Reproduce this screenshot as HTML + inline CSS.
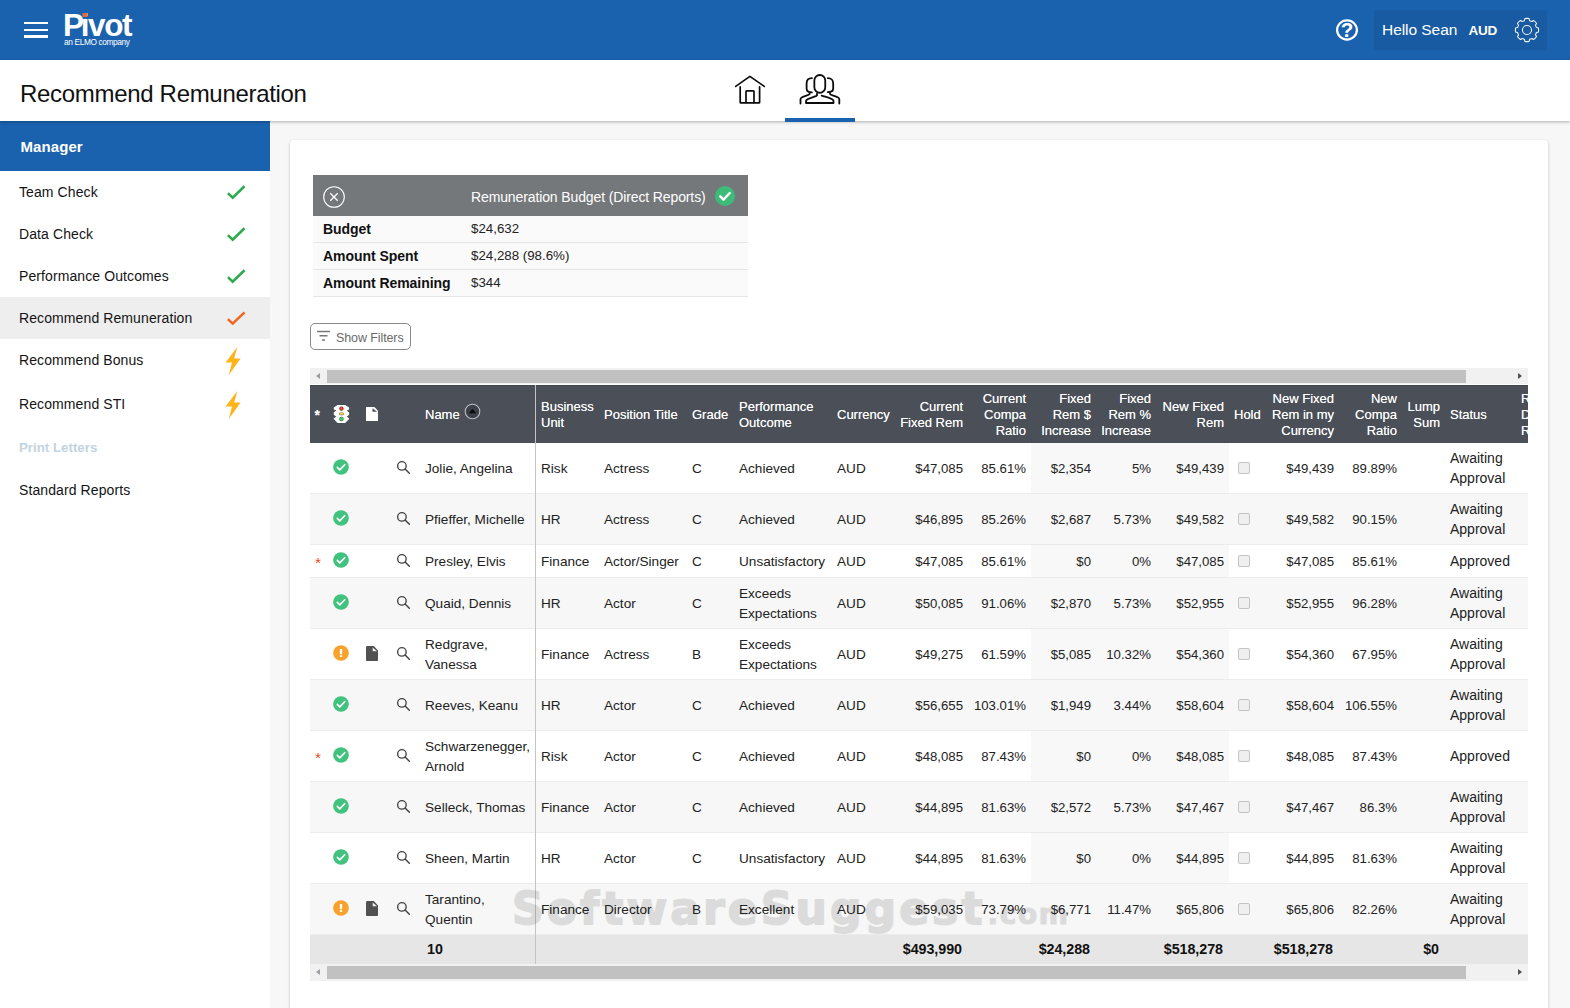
<!DOCTYPE html>
<html lang="en">
<head>
<meta charset="utf-8">
<title>Recommend Remuneration</title>
<style>
*{box-sizing:border-box;margin:0;padding:0}
html,body{width:1570px;height:1008px;overflow:hidden;background:#f7f7f7;font-family:"Liberation Sans",sans-serif;color:#212121}
.abs{position:absolute}
/* top bar */
#top{position:absolute;left:0;top:0;width:1570px;height:60px;background:#1a62ae}
#burger{position:absolute;left:24px;top:22px;width:24px;height:16px}
#burger i{position:absolute;left:0;width:24px;height:2.4px;background:#fff}
#logo{position:absolute;left:63px;top:7px;color:#fff;font-weight:bold;font-size:31.5px;letter-spacing:-1.35px;line-height:36px;white-space:nowrap}
#logodot{position:absolute;left:82.8px;top:12.8px;width:4.7px;height:4.4px;background:#f26a21}
#logosub{position:absolute;left:64px;top:37px;color:#fff;font-size:8.3px;letter-spacing:-.36px;line-height:10px;white-space:nowrap}
#userbox{position:absolute;left:1374px;top:10px;width:172.6px;height:39.6px;background:#195ba2;border-radius:3px}
#hello{position:absolute;left:1382px;top:19.7px;color:#fff;font-size:15.5px;line-height:20px;white-space:nowrap;letter-spacing:-.05px}
#aud{position:absolute;left:1468.6px;top:20.8px;color:#fff;font-size:13.5px;font-weight:bold;line-height:20px;letter-spacing:-.3px}
/* title bar */
#tbar{position:absolute;left:0;top:60px;width:1570px;height:61px;background:#fff;box-shadow:0 1px 3px rgba(0,0,0,.3);z-index:4}
#title{position:absolute;left:20px;top:18.7px;font-size:24px;line-height:30px;color:#111;white-space:nowrap;letter-spacing:-.31px}
#tabline{position:absolute;left:785px;top:58px;width:70px;height:4px;background:#1a62ae}
/* sidebar */
#side{position:absolute;left:0;top:121px;width:270px;height:887px;background:#fff}
#mgr{position:absolute;left:0;top:0;width:270px;height:50px;background:#1a62ae;color:#fff;font-weight:bold;font-size:15px;line-height:51.7px;padding-left:20.5px;letter-spacing:.08px}
.si{position:absolute;left:19px;font-size:14px;line-height:20px;color:#141414;white-space:nowrap;letter-spacing:.1px;margin-top:-.1px}
.si.dis{color:#c3d3e0;font-weight:bold;font-size:13.3px;letter-spacing:0}
#sel{position:absolute;left:0;top:176px;width:270px;height:42px;background:#eee}
.chk{position:absolute;left:225px;width:22px;height:18px}
.bolt{position:absolute;left:223px;width:20px;height:28px}
/* card */
#card{position:absolute;left:290px;top:140px;width:1258px;height:900px;background:#fff;border-radius:4px;box-shadow:0 1px 3px rgba(0,0,0,.24)}
/* budget */
#bud{position:absolute;left:313px;top:175px;width:435px;height:122px;font-size:13.5px}
#budh{position:absolute;left:0;top:0;width:435px;height:41px;background:#75787b;color:#fff}
#budh span{position:absolute;left:158px;top:12.3px;line-height:20px;white-space:nowrap;letter-spacing:-.12px;font-size:14px}
.br{position:absolute;left:0;width:435px;height:27px;background:#fafafa;border-bottom:1px solid #e6e6e6}
.br b{position:absolute;left:10px;top:3.1px;line-height:20px;color:#111;white-space:nowrap;font-size:14px;letter-spacing:-.05px}
.br span{position:absolute;left:158px;top:3.4px;line-height:20px;color:#222;white-space:nowrap;font-size:13.3px}
/* filter button */
#fbtn{position:absolute;left:310px;top:323px;width:101px;height:27px;border:1px solid #8a8a8a;border-radius:5px;background:#fff}
#fbtn span{position:absolute;left:25px;top:6.1px;font-size:12.5px;line-height:16px;color:#6a6a6a;white-space:nowrap;letter-spacing:-.1px}
/* scrollbars */
.sb{position:absolute;left:310px;width:1218px;height:16px;background:#f1f1f1}
.sb i{position:absolute;left:17px;top:2px;width:1139px;height:13px;background:#c1c1c1}
.sb b{position:absolute;top:5px;width:0;height:0;border:3.7px solid transparent}
.sb b.l{left:5.8px;border-right:4.3px solid #a09ca3;border-left:0}
.sb b.r{right:5.8px;border-left:4.4px solid #505050;border-right:0;top:4.8px;border-top-width:3.8px;border-bottom-width:3.8px}
/* grid */
#grid{position:absolute;left:310px;top:385px;width:1218px;height:579px;overflow:hidden}
#gh{position:absolute;left:0;top:0;width:1218px;height:58px;background:#4a4f58;box-shadow:inset 0 1px 0 #424750;color:#fff;font-size:13px;line-height:16px}
#gh span{position:absolute;white-space:nowrap;margin-top:-.1px;text-shadow:0 0 .6px rgba(255,255,255,.75)}
#gh span.r{text-align:right}
#vline{position:absolute;left:225px;top:0;width:1px;height:579px;background:#c4c4c4;z-index:3}
#body{position:absolute;left:0;top:58px;width:1218px;height:492px}
.row{position:absolute;left:0;width:1218px;border-bottom:1px solid #ebebeb;font-size:13.6px;line-height:20px;color:#222}
.row.odd{background:#fff}
.row.even{background:#f7f7f7}
.row .hl{position:absolute;left:721px;top:0;width:198px;height:100%;background:#f8f8f8}
.row.even .hl{background:transparent}
.c{position:absolute;top:0;height:100%;display:flex;align-items:center;white-space:nowrap}
.c.r{justify-content:flex-end;text-align:right;font-size:13.2px}
.c>span{position:relative;top:.7px}
.c.stat>span{top:-.2px}
.c.star{left:5px;color:#e8502a;font-size:15.5px;padding-top:4px}
.ic{position:absolute;top:50%}
.ic.st{left:23px;width:16px;height:16px;margin-top:-9px}
.ic.doc{left:56px;width:12px;height:15.2px;margin-top:-8.2px}
.ic.sr{left:86px;width:15px;height:15px;margin-top:-8px}
.name{left:115px}.bu{left:231px}.pos{left:294px}.gr{left:382px}.perf{left:429px}.cur{left:527px}
.cfr{left:560px;width:93px}.ccr{left:640px;width:76px}.frd{left:700px;width:81px}.frp{left:760px;width:81px}.nfr{left:830px;width:84px}
.nfrc{left:940px;width:84px}.ncr{left:1010px;width:77px}.stat{left:1140px;font-size:14px}
.cb{position:absolute;left:928px;top:50%;margin-top:-6px;width:12px;height:12px;border:1px solid #c4c4c4;border-radius:2px;background:#efefef}
#foot{position:absolute;left:0;top:550px;width:1218px;height:29px;background:#e6e6e6;font-weight:bold;font-size:14.3px;color:#111;letter-spacing:-.05px}
#foot span{position:absolute;top:3.6px;line-height:20px;white-space:nowrap;text-align:right}
#wm{position:absolute;left:512px;top:874px;font-family:"DejaVu Sans","Liberation Sans",sans-serif;font-size:44px;font-weight:bold;color:#000;-webkit-text-stroke:1.8px #000;opacity:.105;letter-spacing:3.1px;line-height:70px;white-space:nowrap;z-index:5;pointer-events:none}
#wm small{font-size:28px;letter-spacing:1.6px;margin-left:2px;-webkit-text-stroke:1.2px #000}
</style>
</head>
<body>
<div id="top">
  <div id="burger"><i style="top:0"></i><i style="top:6.7px"></i><i style="top:13.4px"></i></div>
  <div id="logo"><span style="letter-spacing:-3.4px">P</span>ivot</div><div id="logodot"></div>
  <div id="logosub">an ELMO company</div>
  <svg class="abs" style="left:1335.4px;top:17.5px" width="24" height="24" viewBox="0 0 24 24"><ellipse cx="12" cy="12" rx="9.9" ry="9.55" fill="none" stroke="#fff" stroke-width="2.2"/><text x="12" y="19.4" text-anchor="middle" font-family="Liberation Sans, sans-serif" font-weight="bold" font-size="20.5" fill="#fff">?</text></svg>
  <div id="userbox"></div>
  <div id="hello">Hello Sean</div>
  <div id="aud">AUD</div>
  <svg class="abs" style="left:1513px;top:16px" width="28" height="28" viewBox="0 0 28 28"><g fill="none" stroke="#fff" stroke-width="1.05" opacity=".96"><circle cx="14" cy="14" r="4.500"/><path d="M11.41 4.65L11.89 2.59A11.6 11.6 0 0 1 16.11 2.59L16.59 4.65A9.7 9.7 0 0 1 18.78 5.56L20.57 4.44A11.6 11.6 0 0 1 23.56 7.43L22.44 9.22A9.7 9.7 0 0 1 23.35 11.41L25.41 11.89A11.6 11.6 0 0 1 25.41 16.11L23.35 16.59A9.7 9.7 0 0 1 22.44 18.78L23.56 20.57A11.6 11.6 0 0 1 20.57 23.56L18.78 22.44A9.7 9.7 0 0 1 16.59 23.35L16.11 25.41A11.6 11.6 0 0 1 11.89 25.41L11.41 23.35A9.7 9.7 0 0 1 9.22 22.44L7.43 23.56A11.6 11.6 0 0 1 4.44 20.57L5.56 18.78A9.7 9.7 0 0 1 4.65 16.59L2.59 16.11A11.6 11.6 0 0 1 2.59 11.89L4.65 11.41A9.7 9.7 0 0 1 5.56 9.22L4.44 7.43A11.6 11.6 0 0 1 7.43 4.44L9.22 5.56A9.7 9.7 0 0 1 11.41 4.65Z" stroke-linejoin="round"/></g></svg>
</div>
<div id="tbar">
  <div id="title">Recommend Remuneration</div>
  <svg class="abs" style="left:732px;top:12px" width="36" height="36" viewBox="0 0 36 36"><g fill="none" stroke="#0c0c0c" stroke-width="1.7" stroke-linecap="round" stroke-linejoin="round"><path d="M3.700 14.400L17.900 4.400l14.400 10"/><path d="M8.200 14.900v15.300a.7.700 0 0 0 .7.700h18a.7.700 0 0 0 .7-.7v-15.300"/><path d="M14 30.400v-10.800a.7.700 0 0 1 .7-.7h6.600a.7.700 0 0 1 .7.700v10.800"/></g></svg>
  <svg class="abs" style="left:796px;top:10px" width="48" height="38" viewBox="0 0 48 38"><g fill="none" stroke="#0c0c0c" stroke-width="1.8" stroke-linecap="round" stroke-linejoin="round"><rect x="18.350" y="5" width="10.900" height="17.800" rx="5.450"/><path d="M21 23.600v1.800c0 1.300-11 2.600-11 5.600v2h27.500v-2c0-2.600-8-4-11.800-5.400"/><path d="M15.900 8.200c-3.400 0-5.300 2.300-5.300 5.300v5c0 2 1.900 3.800 5.300 3.900"/><path d="M13.600 22.900v1.200c0 1.200-9.100 2.200-9.100 4.900v4.600"/><path d="M31.900 8.200c3.300 0 5.300 2.300 5.300 5.300v5c0 2-2 3.700-5.500 3.700"/><path d="M34 22.900v1.200c0 1.200 9.300 2.200 9.300 4.900v4.600"/></g></svg>
  <div id="tabline"></div>
</div>
<div id="side">
  <div id="mgr">Manager</div>
  <div id="sel"></div>
  <div class="si" style="top:61px">Team Check</div>
  <div class="si" style="top:103px">Data Check</div>
  <div class="si" style="top:145px">Performance Outcomes</div>
  <div class="si" style="top:187px">Recommend Remuneration</div>
  <div class="si" style="top:229px">Recommend Bonus</div>
  <div class="si" style="top:273px">Recommend STI</div>
  <div class="si dis" style="top:317px">Print Letters</div>
  <div class="si" style="top:359px">Standard Reports</div>
  <svg class="chk" style="top:62px" viewBox="0 0 22 18"><path d="M2.900 10.100l4.800 4.500L19.500 3.300" fill="none" stroke="#2daa4e" stroke-width="2.6"/></svg>
  <svg class="chk" style="top:104px" viewBox="0 0 22 18"><path d="M2.900 10.100l4.800 4.500L19.500 3.300" fill="none" stroke="#2daa4e" stroke-width="2.6"/></svg>
  <svg class="chk" style="top:146px" viewBox="0 0 22 18"><path d="M2.900 10.100l4.800 4.500L19.500 3.300" fill="none" stroke="#2daa4e" stroke-width="2.6"/></svg>
  <svg class="chk" style="top:188px" viewBox="0 0 22 18"><path d="M2.900 10.100l4.800 4.500L19.500 3.300" fill="none" stroke="#f4641f" stroke-width="2.5"/></svg>
  <svg class="bolt" style="top:226px" viewBox="0 0 20 28"><path d="M14.300 0L2.600 15.600h6.400L5.800 28 17.600 11.600h-6.400z" fill="#fcb419"/></svg>
  <svg class="bolt" style="top:270px" viewBox="0 0 20 28"><path d="M14.300 0L2.600 15.600h6.400L5.800 28 17.600 11.600h-6.400z" fill="#fcb419"/></svg>
</div>
<div id="card"></div>
<div id="bud">
  <div id="budh">
    <svg class="abs" style="left:9px;top:10px" width="24" height="24" viewBox="0 0 24 24"><circle cx="12" cy="12" r="10.300" fill="none" stroke="#fff" stroke-width="1.100"/><path d="M8.300 8.300l7.400 7.400M15.700 8.300l-7.400 7.400" stroke="#fff" stroke-width="1.300"/></svg>
    <span>Remuneration Budget (Direct Reports)</span>
    <svg class="abs" style="left:402px;top:11px" width="20" height="20" viewBox="0 0 16 16"><circle cx="8" cy="8" r="8" fill="#3dbb78"/><path d="M4.200 8.300l2.600 2.600 5-5.300" fill="none" stroke="#fff" stroke-width="1.900" stroke-linecap="round" stroke-linejoin="round"/></svg>
  </div>
  <div class="br" style="top:41px"><b>Budget</b><span>$24,632</span></div>
  <div class="br" style="top:68px"><b>Amount Spent</b><span>$24,288 (98.6%)</span></div>
  <div class="br" style="top:95px"><b>Amount Remaining</b><span>$344</span></div>
</div>
<div id="fbtn">
  <svg class="abs" style="left:5px;top:5.4px" width="15" height="14" viewBox="0 0 15 14"><path d="M1 2.500h13M3.500 6.800h8M6 11h3" stroke="#777" stroke-width="1.500" fill="none"/></svg>
  <span>Show Filters</span>
</div>
<div class="sb" style="top:368px"><b class="l"></b><i></i><b class="r"></b></div>
<div id="grid">
  <div id="gh">
    <span style="left:4.6px;top:22.2px;font-weight:bold;font-size:14px">*</span>
    <svg class="abs" style="left:23px;top:19px" width="17" height="20" viewBox="0 0 17 20"><path d="M4.500 .9H12.100L16.100 3.500V5.400L13.800 6.600L16.100 8.600V10.800L13.800 12.700L16.100 14.200V15L12.100 19H4.500L.8 15V14.200L3.300 12.700L.8 10.800V8.600L3.300 6.600L.8 5.400V3.500Z" fill="#fff"/><circle cx="8.450" cy="4.700" r="2.150" fill="#4a3a30"/><circle cx="8.450" cy="4.700" r="1.750" fill="#f03a22"/><rect x="6.200" y="8.500" width="4.500" height="2.700" rx=".9" fill="#5a5a4a"/><rect x="6.600" y="8.850" width="3.700" height="2" rx=".6" fill="#fbd15a"/><circle cx="8.450" cy="15" r="2.200" fill="#3a5a40"/><circle cx="8.450" cy="15" r="1.800" fill="#3fd05c"/></svg>
    <svg class="abs" style="left:55.7px;top:21.8px" width="12.5" height="14.3" viewBox="0 0 12.5 14.3"><path d="M0 0H8.400L12.500 4.200V14.300H0Z" fill="#fff"/><path d="M6.500 1.300V4.800H11.100Z" fill="#4a4f58"/></svg>
    <svg class="abs" style="left:154px;top:18.3px" width="17" height="17" viewBox="0 0 17 17"><circle cx="8.500" cy="8.500" r="7.300" fill="#3c4048" stroke="#b9bcc0" stroke-width="1.100"/><path d="M4.600 10.200l3.900-4.200 3.900 4.200z" fill="#0a0a0a"/></svg>
    <span style="left:115px;top:22px">Name</span>
    <span style="left:231px;top:14px">Business<br>Unit</span>
    <span style="left:294px;top:22px">Position Title</span>
    <span style="left:382px;top:22px">Grade</span>
    <span style="left:429px;top:14px">Performance<br>Outcome</span>
    <span style="left:527px;top:22px">Currency</span>
    <span class="r" style="right:565px;top:14px">Current<br>Fixed Rem</span>
    <span class="r" style="right:502px;top:6px">Current<br>Compa<br>Ratio</span>
    <span class="r" style="right:437px;top:6px">Fixed<br>Rem $<br>Increase</span>
    <span class="r" style="right:377px;top:6px">Fixed<br>Rem %<br>Increase</span>
    <span class="r" style="right:304px;top:14px">New Fixed<br>Rem</span>
    <span style="left:924px;top:22px">Hold</span>
    <span class="r" style="right:194px;top:6px">New Fixed<br>Rem in my<br>Currency</span>
    <span class="r" style="right:131px;top:6px">New<br>Compa<br>Ratio</span>
    <span class="r" style="right:88px;top:14px">Lump<br>Sum</span>
    <span style="left:1140px;top:22px">Status</span>
    <span style="left:1211px;top:6px">R<br>D<br>R</span>
  </div>
  <div id="body">
<div class="row odd" style="top:0px;height:51px"><div class="hl"></div><svg class="ic st" viewBox="0 0 16 16"><circle cx="8" cy="8" r="7.85" fill="#41c27e"/><path d="M4.3 8.4l2.5 2.5 4.9-5.2" fill="none" stroke="#fff" stroke-width="1.6" stroke-linecap="round" stroke-linejoin="round"/></svg><svg class="ic sr" viewBox="0 0 16 16"><circle cx="6.3" cy="6.3" r="4.55" fill="none" stroke="#444" stroke-width="1.45"/><path d="M9.7 9.7l4.5 4.5" stroke="#444" stroke-width="1.6" stroke-linecap="round"/></svg><span class="c name"><span>Jolie, Angelina</span></span><span class="c bu"><span>Risk</span></span><span class="c pos"><span>Actress</span></span><span class="c gr"><span>C</span></span><span class="c perf"><span>Achieved</span></span><span class="c cur"><span>AUD</span></span><span class="c r cfr"><span>$47,085</span></span><span class="c r ccr"><span>85.61%</span></span><span class="c r frd"><span>$2,354</span></span><span class="c r frp"><span>5%</span></span><span class="c r nfr"><span>$49,439</span></span><i class="cb"></i><span class="c r nfrc"><span>$49,439</span></span><span class="c r ncr"><span>89.89%</span></span><span class="c stat"><span>Awaiting<br>Approval</span></span></div>
<div class="row even" style="top:51px;height:51px"><div class="hl"></div><svg class="ic st" viewBox="0 0 16 16"><circle cx="8" cy="8" r="7.85" fill="#41c27e"/><path d="M4.3 8.4l2.5 2.5 4.9-5.2" fill="none" stroke="#fff" stroke-width="1.6" stroke-linecap="round" stroke-linejoin="round"/></svg><svg class="ic sr" viewBox="0 0 16 16"><circle cx="6.3" cy="6.3" r="4.55" fill="none" stroke="#444" stroke-width="1.45"/><path d="M9.7 9.7l4.5 4.5" stroke="#444" stroke-width="1.6" stroke-linecap="round"/></svg><span class="c name"><span>Pfieffer, Michelle</span></span><span class="c bu"><span>HR</span></span><span class="c pos"><span>Actress</span></span><span class="c gr"><span>C</span></span><span class="c perf"><span>Achieved</span></span><span class="c cur"><span>AUD</span></span><span class="c r cfr"><span>$46,895</span></span><span class="c r ccr"><span>85.26%</span></span><span class="c r frd"><span>$2,687</span></span><span class="c r frp"><span>5.73%</span></span><span class="c r nfr"><span>$49,582</span></span><i class="cb"></i><span class="c r nfrc"><span>$49,582</span></span><span class="c r ncr"><span>90.15%</span></span><span class="c stat"><span>Awaiting<br>Approval</span></span></div>
<div class="row odd" style="top:102px;height:33px"><div class="hl"></div><span class="c star">*</span><svg class="ic st" viewBox="0 0 16 16"><circle cx="8" cy="8" r="7.85" fill="#41c27e"/><path d="M4.3 8.4l2.5 2.5 4.9-5.2" fill="none" stroke="#fff" stroke-width="1.6" stroke-linecap="round" stroke-linejoin="round"/></svg><svg class="ic sr" viewBox="0 0 16 16"><circle cx="6.3" cy="6.3" r="4.55" fill="none" stroke="#444" stroke-width="1.45"/><path d="M9.7 9.7l4.5 4.5" stroke="#444" stroke-width="1.6" stroke-linecap="round"/></svg><span class="c name"><span>Presley, Elvis</span></span><span class="c bu"><span>Finance</span></span><span class="c pos"><span>Actor/Singer</span></span><span class="c gr"><span>C</span></span><span class="c perf"><span>Unsatisfactory</span></span><span class="c cur"><span>AUD</span></span><span class="c r cfr"><span>$47,085</span></span><span class="c r ccr"><span>85.61%</span></span><span class="c r frd"><span>$0</span></span><span class="c r frp"><span>0%</span></span><span class="c r nfr"><span>$47,085</span></span><i class="cb"></i><span class="c r nfrc"><span>$47,085</span></span><span class="c r ncr"><span>85.61%</span></span><span class="c stat"><span>Approved</span></span></div>
<div class="row even" style="top:135px;height:51px"><div class="hl"></div><svg class="ic st" viewBox="0 0 16 16"><circle cx="8" cy="8" r="7.85" fill="#41c27e"/><path d="M4.3 8.4l2.5 2.5 4.9-5.2" fill="none" stroke="#fff" stroke-width="1.6" stroke-linecap="round" stroke-linejoin="round"/></svg><svg class="ic sr" viewBox="0 0 16 16"><circle cx="6.3" cy="6.3" r="4.55" fill="none" stroke="#444" stroke-width="1.45"/><path d="M9.7 9.7l4.5 4.5" stroke="#444" stroke-width="1.6" stroke-linecap="round"/></svg><span class="c name"><span>Quaid, Dennis</span></span><span class="c bu"><span>HR</span></span><span class="c pos"><span>Actor</span></span><span class="c gr"><span>C</span></span><span class="c perf"><span>Exceeds<br>Expectations</span></span><span class="c cur"><span>AUD</span></span><span class="c r cfr"><span>$50,085</span></span><span class="c r ccr"><span>91.06%</span></span><span class="c r frd"><span>$2,870</span></span><span class="c r frp"><span>5.73%</span></span><span class="c r nfr"><span>$52,955</span></span><i class="cb"></i><span class="c r nfrc"><span>$52,955</span></span><span class="c r ncr"><span>96.28%</span></span><span class="c stat"><span>Awaiting<br>Approval</span></span></div>
<div class="row odd" style="top:186px;height:51px"><div class="hl"></div><svg class="ic st" viewBox="0 0 16 16"><circle cx="8" cy="8" r="7.85" fill="#f7a22c"/><rect x="6.85" y="3.9" width="2.3" height="5.3" rx=".3" fill="#fff"/><rect x="6.85" y="10.2" width="2.3" height="1.9" rx=".3" fill="#fff"/></svg><svg class="ic doc" viewBox="0 0 12 15.2"><path d="M1.4 0h6.4l4.2 4.4v9.4a1.4 1.4 0 0 1-1.4 1.4h-9.200a1.400 1.400 0 0 1-1.400-1.400v-12.400a1.400 1.400 0 0 1 1.400-1.400z" fill="#515151"/><path d="M6.700 1.500v3.800h4.300z" fill="#fff" opacity=".92"/></svg><svg class="ic sr" viewBox="0 0 16 16"><circle cx="6.3" cy="6.3" r="4.55" fill="none" stroke="#444" stroke-width="1.45"/><path d="M9.7 9.7l4.5 4.5" stroke="#444" stroke-width="1.6" stroke-linecap="round"/></svg><span class="c name"><span>Redgrave,<br>Vanessa</span></span><span class="c bu"><span>Finance</span></span><span class="c pos"><span>Actress</span></span><span class="c gr"><span>B</span></span><span class="c perf"><span>Exceeds<br>Expectations</span></span><span class="c cur"><span>AUD</span></span><span class="c r cfr"><span>$49,275</span></span><span class="c r ccr"><span>61.59%</span></span><span class="c r frd"><span>$5,085</span></span><span class="c r frp"><span>10.32%</span></span><span class="c r nfr"><span>$54,360</span></span><i class="cb"></i><span class="c r nfrc"><span>$54,360</span></span><span class="c r ncr"><span>67.95%</span></span><span class="c stat"><span>Awaiting<br>Approval</span></span></div>
<div class="row even" style="top:237px;height:51px"><div class="hl"></div><svg class="ic st" viewBox="0 0 16 16"><circle cx="8" cy="8" r="7.85" fill="#41c27e"/><path d="M4.3 8.4l2.5 2.5 4.9-5.2" fill="none" stroke="#fff" stroke-width="1.6" stroke-linecap="round" stroke-linejoin="round"/></svg><svg class="ic sr" viewBox="0 0 16 16"><circle cx="6.3" cy="6.3" r="4.55" fill="none" stroke="#444" stroke-width="1.45"/><path d="M9.7 9.7l4.5 4.5" stroke="#444" stroke-width="1.6" stroke-linecap="round"/></svg><span class="c name"><span>Reeves, Keanu</span></span><span class="c bu"><span>HR</span></span><span class="c pos"><span>Actor</span></span><span class="c gr"><span>C</span></span><span class="c perf"><span>Achieved</span></span><span class="c cur"><span>AUD</span></span><span class="c r cfr"><span>$56,655</span></span><span class="c r ccr"><span>103.01%</span></span><span class="c r frd"><span>$1,949</span></span><span class="c r frp"><span>3.44%</span></span><span class="c r nfr"><span>$58,604</span></span><i class="cb"></i><span class="c r nfrc"><span>$58,604</span></span><span class="c r ncr"><span>106.55%</span></span><span class="c stat"><span>Awaiting<br>Approval</span></span></div>
<div class="row odd" style="top:288px;height:51px"><div class="hl"></div><span class="c star">*</span><svg class="ic st" viewBox="0 0 16 16"><circle cx="8" cy="8" r="7.85" fill="#41c27e"/><path d="M4.3 8.4l2.5 2.5 4.9-5.2" fill="none" stroke="#fff" stroke-width="1.6" stroke-linecap="round" stroke-linejoin="round"/></svg><svg class="ic sr" viewBox="0 0 16 16"><circle cx="6.3" cy="6.3" r="4.55" fill="none" stroke="#444" stroke-width="1.45"/><path d="M9.7 9.7l4.5 4.5" stroke="#444" stroke-width="1.6" stroke-linecap="round"/></svg><span class="c name"><span>Schwarzenegger,<br>Arnold</span></span><span class="c bu"><span>Risk</span></span><span class="c pos"><span>Actor</span></span><span class="c gr"><span>C</span></span><span class="c perf"><span>Achieved</span></span><span class="c cur"><span>AUD</span></span><span class="c r cfr"><span>$48,085</span></span><span class="c r ccr"><span>87.43%</span></span><span class="c r frd"><span>$0</span></span><span class="c r frp"><span>0%</span></span><span class="c r nfr"><span>$48,085</span></span><i class="cb"></i><span class="c r nfrc"><span>$48,085</span></span><span class="c r ncr"><span>87.43%</span></span><span class="c stat"><span>Approved</span></span></div>
<div class="row even" style="top:339px;height:51px"><div class="hl"></div><svg class="ic st" viewBox="0 0 16 16"><circle cx="8" cy="8" r="7.85" fill="#41c27e"/><path d="M4.3 8.4l2.5 2.5 4.9-5.2" fill="none" stroke="#fff" stroke-width="1.6" stroke-linecap="round" stroke-linejoin="round"/></svg><svg class="ic sr" viewBox="0 0 16 16"><circle cx="6.3" cy="6.3" r="4.55" fill="none" stroke="#444" stroke-width="1.45"/><path d="M9.7 9.7l4.5 4.5" stroke="#444" stroke-width="1.6" stroke-linecap="round"/></svg><span class="c name"><span>Selleck, Thomas</span></span><span class="c bu"><span>Finance</span></span><span class="c pos"><span>Actor</span></span><span class="c gr"><span>C</span></span><span class="c perf"><span>Achieved</span></span><span class="c cur"><span>AUD</span></span><span class="c r cfr"><span>$44,895</span></span><span class="c r ccr"><span>81.63%</span></span><span class="c r frd"><span>$2,572</span></span><span class="c r frp"><span>5.73%</span></span><span class="c r nfr"><span>$47,467</span></span><i class="cb"></i><span class="c r nfrc"><span>$47,467</span></span><span class="c r ncr"><span>86.3%</span></span><span class="c stat"><span>Awaiting<br>Approval</span></span></div>
<div class="row odd" style="top:390px;height:51px"><div class="hl"></div><svg class="ic st" viewBox="0 0 16 16"><circle cx="8" cy="8" r="7.85" fill="#41c27e"/><path d="M4.3 8.4l2.5 2.5 4.9-5.2" fill="none" stroke="#fff" stroke-width="1.6" stroke-linecap="round" stroke-linejoin="round"/></svg><svg class="ic sr" viewBox="0 0 16 16"><circle cx="6.3" cy="6.3" r="4.55" fill="none" stroke="#444" stroke-width="1.45"/><path d="M9.7 9.7l4.5 4.5" stroke="#444" stroke-width="1.6" stroke-linecap="round"/></svg><span class="c name"><span>Sheen, Martin</span></span><span class="c bu"><span>HR</span></span><span class="c pos"><span>Actor</span></span><span class="c gr"><span>C</span></span><span class="c perf"><span>Unsatisfactory</span></span><span class="c cur"><span>AUD</span></span><span class="c r cfr"><span>$44,895</span></span><span class="c r ccr"><span>81.63%</span></span><span class="c r frd"><span>$0</span></span><span class="c r frp"><span>0%</span></span><span class="c r nfr"><span>$44,895</span></span><i class="cb"></i><span class="c r nfrc"><span>$44,895</span></span><span class="c r ncr"><span>81.63%</span></span><span class="c stat"><span>Awaiting<br>Approval</span></span></div>
<div class="row even" style="top:441px;height:51px"><div class="hl"></div><svg class="ic st" viewBox="0 0 16 16"><circle cx="8" cy="8" r="7.85" fill="#f7a22c"/><rect x="6.85" y="3.9" width="2.3" height="5.3" rx=".3" fill="#fff"/><rect x="6.85" y="10.2" width="2.3" height="1.9" rx=".3" fill="#fff"/></svg><svg class="ic doc" viewBox="0 0 12 15.2"><path d="M1.4 0h6.4l4.2 4.4v9.4a1.4 1.4 0 0 1-1.4 1.4h-9.200a1.400 1.400 0 0 1-1.400-1.400v-12.400a1.400 1.400 0 0 1 1.400-1.400z" fill="#515151"/><path d="M6.700 1.500v3.800h4.300z" fill="#fff" opacity=".92"/></svg><svg class="ic sr" viewBox="0 0 16 16"><circle cx="6.3" cy="6.3" r="4.55" fill="none" stroke="#444" stroke-width="1.45"/><path d="M9.7 9.7l4.5 4.5" stroke="#444" stroke-width="1.6" stroke-linecap="round"/></svg><span class="c name"><span>Tarantino,<br>Quentin</span></span><span class="c bu"><span>Finance</span></span><span class="c pos"><span>Director</span></span><span class="c gr"><span>B</span></span><span class="c perf"><span>Excellent</span></span><span class="c cur"><span>AUD</span></span><span class="c r cfr"><span>$59,035</span></span><span class="c r ccr"><span>73.79%</span></span><span class="c r frd"><span>$6,771</span></span><span class="c r frp"><span>11.47%</span></span><span class="c r nfr"><span>$65,806</span></span><i class="cb"></i><span class="c r nfrc"><span>$65,806</span></span><span class="c r ncr"><span>82.26%</span></span><span class="c stat"><span>Awaiting<br>Approval</span></span></div>
  </div>
  <div id="foot">
    <span style="left:117px">10</span>
    <span style="right:566px">$493,990</span>
    <span style="right:438px">$24,288</span>
    <span style="right:305px">$518,278</span>
    <span style="right:195px">$518,278</span>
    <span style="right:89px">$0</span>
  </div>
  <div id="vline"></div>
</div>
<div class="sb" style="top:964px;height:17px"><b class="l"></b><i></i><b class="r"></b></div>
<div id="wm">SoftwareSuggest<small>.com</small></div>
</body>
</html>
